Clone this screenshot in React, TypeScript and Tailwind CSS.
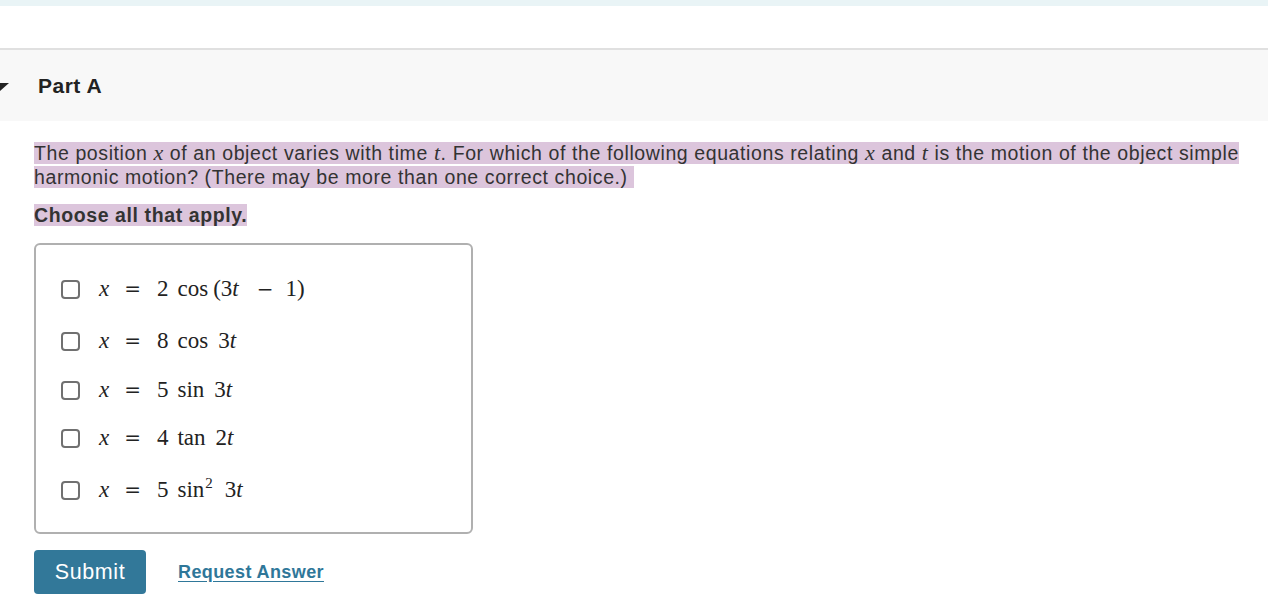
import * as React from "react"

const serif = "font-['Liberation_Serif','Times_New_Roman',serif]"

function V({ children }: { children: React.ReactNode }) {
    return <span className={`${serif} italic`}>{children}</span>
}

// wider operator glyphs, closer to the TeX look
function Op({ children, className }: { children: React.ReactNode; className: string }) {
    return <span className={`font-['DejaVu_Serif',serif] text-[20px] ${className}`}>{children}</span>
}

function Eq() {
    return (
        <>
            <V>x</V>
            <Op className="ml-[15px] mr-[16px]">=</Op>
        </>
    )
}

const CHOICES: { top: number; node: React.ReactNode }[] = [
    {
        top: 32,
        node: (
            <>
                <Eq />2<span className="ml-[9px] mr-[5px]">cos</span>
                <span>(</span>3<V>t</V>
                <Op className="ml-[18px] mr-[12px]">−</Op>1<span>)</span>
            </>
        ),
    },
    {
        top: 28,
        node: (
            <>
                <Eq />8<span className="ml-[9px] mr-[10px]">cos</span>3<V>t</V>
            </>
        ),
    },
    {
        top: 25,
        node: (
            <>
                <Eq />5<span className="ml-[9px] mr-[10px]">sin</span>3<V>t</V>
            </>
        ),
    },
    {
        top: 24,
        node: (
            <>
                <Eq />4<span className="ml-[9px] mr-[10px]">tan</span>2<V>t</V>
            </>
        ),
    },
    {
        top: 28,
        node: (
            <>
                <Eq />5
                <span className="ml-[9px] mr-[12px]">
                    sin<sup className="text-[15px] -top-[9px] ml-[1px]">2</sup>
                </span>
                3<V>t</V>
            </>
        ),
    },
]

export default function App() {
    const mathVar = `${serif} italic text-[22px]`
    return (
        <div className="w-[1268px] h-[608px] overflow-hidden bg-white font-['Liberation_Sans',Arial,sans-serif] text-[#333]">
            {/* top strip */}
            <div className="h-[6px] bg-[#e9f4f6]" />
            <div className="h-[42px]" />

            {/* Part header */}
            <div className="h-[73px] border-t-2 border-[#e0e0e0] bg-[#f8f8f8] flex items-center relative overflow-hidden">
                <span className="absolute -left-[9px] top-[33px] w-0 h-0 border-l-[9px] border-r-[9px] border-t-[8px] border-l-transparent border-r-transparent border-t-[#222]" />
                <h2 className="ml-[38px] text-[21px] tracking-[0.5px] font-bold text-[#222]">Part A</h2>
            </div>

            <div className="pl-[34px] pr-[8px]">
                {/* question */}
                <p className="mt-[20px] text-[19.5px] tracking-[0.6px] leading-[24px] text-[#333]">
                    <span className="bg-[#dcc5dc]">
                        The position <span className={mathVar}>x</span> of an object varies with time{" "}
                        <span className={mathVar}>t</span>. For which of the following equations relating{" "}
                        <span className={mathVar}>x</span> and <span className={mathVar}>t</span> is the motion
                        of the object simple harmonic motion? (There may be more than one correct choice.)&nbsp;
                    </span>
                </p>

                <p className="mt-[14px] text-[19.5px] tracking-[0.6px] leading-[24px] font-bold">
                    <span className="bg-[#dcc5dc]">Choose all that apply.</span>
                </p>

                {/* choices */}
                <div className="mt-[16px] w-[439px] h-[291px] border-2 border-[#b0b0b0] rounded-[6px] pl-[25px]">
                    {CHOICES.map((c, i) => (
                        <label
                            key={i}
                            style={{ marginTop: c.top }}
                            className="flex items-center h-[24px]"
                        >
                            <span className="w-[19px] h-[19px] border-2 border-[#707070] rounded-[4px] bg-white shrink-0" />
                            <span className={`ml-[19px] ${serif} text-[23px] text-[#222] flex items-baseline whitespace-nowrap`}>
                                {c.node}
                            </span>
                        </label>
                    ))}
                </div>

                {/* actions */}
                <div className="mt-[16px] flex items-center gap-[32px]">
                    <button className="w-[112px] h-[44px] rounded-[4px] bg-[#327899] text-white text-[21.5px] tracking-[0.6px]">
                        Submit
                    </button>
                    <a href="#" className="text-[18px] tracking-[0.4px] font-bold text-[#2f7799] underline underline-offset-[3px]">
                        Request Answer
                    </a>
                </div>
            </div>
        </div>
    )
}
